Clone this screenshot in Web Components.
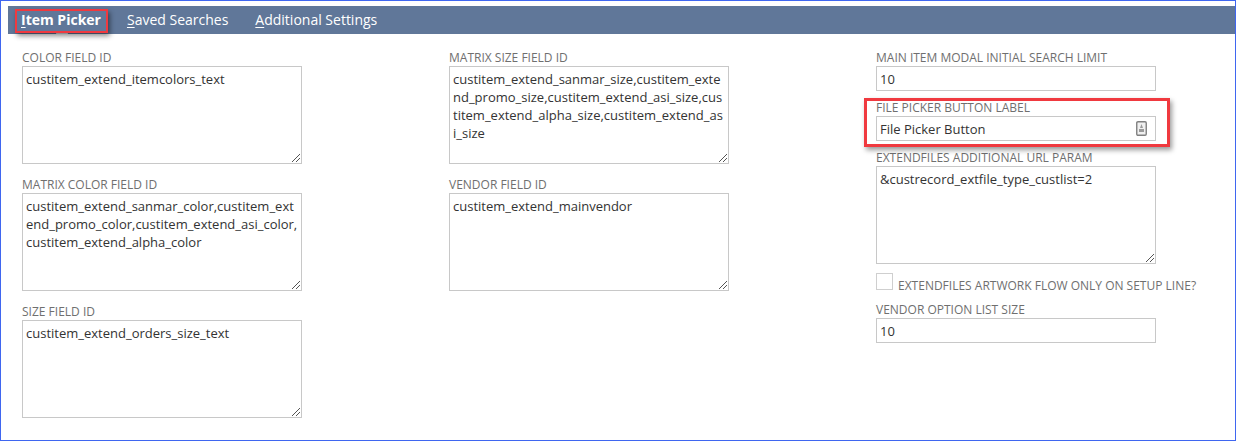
<!DOCTYPE html>
<html>
<head>
<meta charset="utf-8">
<style>
  html, body { margin: 0; height: 100%; background: #fff; }
  body { font-family: "Open Sans", sans-serif; overflow: hidden; }
</style>
</head>
<body>
<app-shell>
  <tab-bar slot="tabs">
    <tab-item active key="I" rest="tem Picker"></tab-item>
    <tab-item key="S" rest="aved Searches"></tab-item>
    <tab-item key="A" rest="dditional Settings"></tab-item>
  </tab-bar>
  <field-column>
    <area-field label="COLOR FIELD ID">custitem_extend_itemcolors_text</area-field>
    <area-field label="MATRIX COLOR FIELD ID">custitem_extend_sanmar_color,custitem_extend_promo_color,custitem_extend_asi_color,custitem_extend_alpha_color</area-field>
    <area-field label="SIZE FIELD ID">custitem_extend_orders_size_text</area-field>
  </field-column>
  <field-column>
    <area-field label="MATRIX SIZE FIELD ID">custitem_extend_sanmar_size,custitem_extend_promo_size,custitem_extend_asi_size,custitem_extend_alpha_size,custitem_extend_asi_size</area-field>
    <area-field label="VENDOR FIELD ID">custitem_extend_mainvendor</area-field>
  </field-column>
  <field-column>
    <text-field label="MAIN ITEM MODAL INITIAL SEARCH LIMIT">10</text-field>
    <text-field label="FILE PICKER BUTTON LABEL" picker>File Picker Button</text-field>
    <area-field label="EXTENDFILES ADDITIONAL URL PARAM">&amp;custrecord_extfile_type_custlist=2</area-field>
    <check-field label="EXTENDFILES ARTWORK FLOW ONLY ON SETUP LINE?"></check-field>
    <text-field label="VENDOR OPTION LIST SIZE">10</text-field>
  </field-column>
</app-shell>

<script>
class AppShell extends HTMLElement {
  constructor() {
    super();
    this.attachShadow({ mode: "open" });
    this.shadowRoot.innerHTML = `
      <style>
        :host {
          display: block;
          box-sizing: border-box;
          width: 1236px;
          height: 441px;
          border: 1px solid #3f66f0;
          padding: 5px 0 0 7px;
          font-family: "Open Sans", sans-serif;
        }
        .cols {
          display: grid;
          grid-template-columns: repeat(3, 427px);
          padding: 15px 0 0 14px;
        }
      </style>
      <slot name="tabs"></slot>
      <div class="cols"><slot></slot></div>
    `;
  }
}
customElements.define("app-shell", AppShell);

class TabBar extends HTMLElement {
  constructor() {
    super();
    this.attachShadow({ mode: "open" });
    this.shadowRoot.innerHTML = `
      <style>
        :host {
          display: flex;
          height: 28px;
          background: #607799;
          align-items: center;
          padding-left: 7px;
          gap: 2px;
        }
      </style>
      <slot></slot>
    `;
  }
}
customElements.define("tab-bar", TabBar);

class TabItem extends HTMLElement {
  constructor() {
    super();
    this.attachShadow({ mode: "open" });
    var active = this.hasAttribute("active");
    this.shadowRoot.innerHTML = `
      <style>
        :host {
          display: block;
          position: relative;
          padding: 0 19px 0 6px;
          font-size: 14px;
          line-height: 28px;
          color: #fff;
          font-weight: ${active ? 700 : 400};
          white-space: nowrap;
        }
        :host([active]) { padding: 0 7px 0 6px; margin-right: 11px; }
        u { text-underline-offset: 2px; }
        .mark {
          position: absolute;
          left: 0; right: 0; top: 3px;
          height: 24px;
          box-sizing: border-box;
          border: 2px solid #f0393f;
          box-shadow: 2px 3px 5px rgba(0,0,0,.45);
        }
        .notch {
          position: absolute;
          left: 41px; top: 26px;
          width: 12px; height: 2px;
          background: #dfe3ea;
          border-radius: 3px 3px 0 0;
        }
      </style>
      <u>${this.getAttribute("key")}</u>${this.getAttribute("rest")}
      ${active ? '<div class="notch"></div><div class="mark"></div>' : ""}
    `;
  }
}
customElements.define("tab-item", TabItem);

class FieldColumn extends HTMLElement {
  constructor() {
    super();
    this.attachShadow({ mode: "open" });
    this.shadowRoot.innerHTML = `
      <style>
        :host { display: flex; flex-direction: column; width: 280px; }
      </style>
      <slot></slot>
    `;
  }
}
customElements.define("field-column", FieldColumn);

var labelCss = `
  .lbl {
    display: block;
    font-size: 12px;
    line-height: 17px;
    height: 17px;
    color: #6f6f6f;
    white-space: nowrap;
  }
`;

class AreaField extends HTMLElement {
  constructor() {
    super();
    this.attachShadow({ mode: "open" });
    this.shadowRoot.innerHTML = `
      <style>
        :host { display: block; margin-bottom: 12px; }
        ${labelCss}
        .box {
          position: relative;
          box-sizing: border-box;
          height: 98px;
          border: 1px solid #c8c8c8;
          padding: 3px 3px;
          font-size: 13px;
          line-height: 18px;
          color: #333;
          word-break: break-all;
          overflow: hidden;
        }
        svg { position: absolute; right: 1px; bottom: 1px; }
      </style>
      <span class="lbl">${this.getAttribute("label")}</span>
      <div class="box"><slot></slot>
        <svg width="9" height="9" viewBox="0 0 9 9" fill="none" stroke="#555" stroke-width="1">
          <path d="M1 9 9 1M5 9 9 5"/>
        </svg>
      </div>
    `;
  }
}
customElements.define("area-field", AreaField);

class TextField extends HTMLElement {
  constructor() {
    super();
    this.attachShadow({ mode: "open" });
    var picker = this.hasAttribute("picker");
    this.shadowRoot.innerHTML = `
      <style>
        :host { display: block; position: relative; margin-bottom: 8px; }
        ${labelCss}
        .box {
          display: flex;
          align-items: center;
          justify-content: space-between;
          box-sizing: border-box;
          height: 25px;
          border: 1px solid #c8c8c8;
          padding: 0 8px 0 3px;
          font-size: 13px;
          color: #333;
        }
        .mark {
          position: absolute;
          left: -12px; right: -14px; top: -1px; bottom: -6px;
          border: 3px solid #f0393f;
          box-shadow: 2px 3px 5px rgba(0,0,0,.4);
        }
      </style>
      <span class="lbl">${this.getAttribute("label")}</span>
      <div class="box"><span><slot></slot></span>
        ${picker ? `<svg width="11" height="15" viewBox="0 0 11 15">
          <rect x=".75" y=".75" width="9.5" height="13.5" rx="1.2" fill="#f0f0f0" stroke="#808080" stroke-width="1.4"/>
          <path d="M5.5 3 7 7H4zM3 8h5v3H3z" fill="#9a9a9a"/>
        </svg>` : ""}
      </div>
      ${picker ? '<div class="mark"></div>' : ""}
    `;
  }
}
customElements.define("text-field", TextField);

class CheckField extends HTMLElement {
  constructor() {
    super();
    this.attachShadow({ mode: "open" });
    this.shadowRoot.innerHTML = `
      <style>
        :host { display: flex; align-items: flex-end; gap: 5px; margin: -3px 0 7px; }
        ${labelCss}
        .lbl { line-height: 16px; height: 16px; }
        i { display: block; flex: none; width: 17px; height: 17px; box-sizing: border-box; border: 1px solid #cfcfcf; margin-bottom: 4px; }
      </style>
      <i></i><span class="lbl">${this.getAttribute("label")}</span>
    `;
  }
}
customElements.define("check-field", CheckField);
</script>
</body>
</html>
